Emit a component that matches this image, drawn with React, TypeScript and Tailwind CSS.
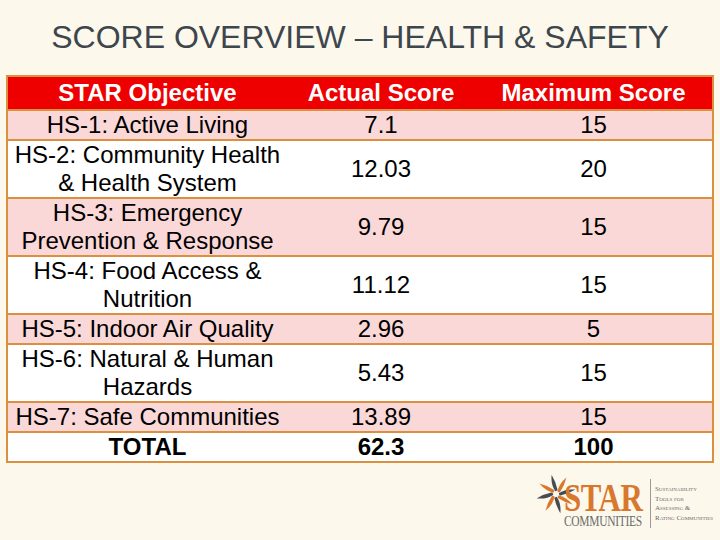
const rows = [
  { name: ["HS-1: Active Living"], actual: "7.1", max: "15", pink: true },
  { name: ["HS-2: Community Health", "& Health System"], actual: "12.03", max: "20", pink: false },
  { name: ["HS-3: Emergency", "Prevention & Response"], actual: "9.79", max: "15", pink: true },
  { name: ["HS-4: Food Access &", "Nutrition"], actual: "11.12", max: "15", pink: false },
  { name: ["HS-5: Indoor Air Quality"], actual: "2.96", max: "5", pink: true },
  { name: ["HS-6: Natural & Human", "Hazards"], actual: "5.43", max: "15", pink: false },
  { name: ["HS-7: Safe Communities"], actual: "13.89", max: "15", pink: true },
]

function Pinwheel() {
  const angles = [0, 45, 90, 135, 180, 225, 270, 315]
  return (
    <svg width="38" height="38" viewBox="0 0 40 40" className="absolute left-0 top-[2px]">
      {angles.map((a, i) => (
        <path
          key={a}
          d="M21.5 17.5 Q23 9 31 2.5 Q29 11 24 18.5 Z"
          fill={i % 2 === 0 ? "#d8782e" : "#474c52"}
          transform={`rotate(${a} 20 20)`}
        />
      ))}
    </svg>
  )
}

function Logo() {
  return (
    <div className="flex items-start">
      <div className="relative w-[113px] h-[56px]">
        <Pinwheel />
        <div className="absolute left-[27px] top-[9px] font-['Liberation_Serif',serif] font-bold text-[31px] leading-[24px] tracking-[-0.5px] text-[#d8782e] origin-top scale-y-[1.3]">
          STAR
        </div>
        <div className="absolute left-[27px] top-[41px] font-['Liberation_Serif',serif] text-[11.5px] leading-[12px] text-[#6b6b6b] origin-top scale-y-[1.2] tracking-[-0.3px]">
          COMMUNITIES
        </div>
      </div>
      <div className="w-px h-[49px] mt-[6px] bg-[#9a9a9a]" />
      <div className="pl-[4px] pt-[12px] font-['Liberation_Serif',serif] text-[7px] leading-[9.5px] text-[#6b6b6b] [font-variant-caps:small-caps] whitespace-nowrap">
        <div>Sustainability</div>
        <div>Tools for</div>
        <div>Assessing &amp;</div>
        <div>Rating Communities</div>
      </div>
    </div>
  )
}

export default function App() {
  return (
    <div className="w-[720px] h-[540px] bg-[#fdf8ec] font-['Liberation_Sans',Arial,sans-serif] overflow-hidden">
      <h1 className="pt-[21px] text-center text-[32px] leading-[32px] text-[#3d464d]">
        SCORE OVERVIEW – HEALTH &amp; SAFETY
      </h1>

      <div className="mt-[22px] mx-[6px] border-2 border-[#dc8f3f] text-[24px] leading-[28px] text-black">
        {/* Header */}
        <div className="grid grid-cols-[279px_188px_1fr] bg-[#ef0000] text-white font-bold text-center py-[2px]">
          <div>STAR Objective</div>
          <div>Actual Score</div>
          <div>Maximum Score</div>
        </div>

        {rows.map((r) => (
          <div
            key={r.name[0]}
            className={`grid grid-cols-[279px_188px_1fr] items-center text-center border-t-2 border-[#dc8f3f] ${
              r.pink ? "bg-[#fbd8d8]" : "bg-white"
            }`}
          >
            <div>
              {r.name.map((l) => (
                <div key={l}>{l}</div>
              ))}
            </div>
            <div>{r.actual}</div>
            <div>{r.max}</div>
          </div>
        ))}

        {/* Total */}
        <div className="grid grid-cols-[279px_188px_1fr] text-center font-bold border-t-2 border-[#dc8f3f] bg-white">
          <div>TOTAL</div>
          <div>62.3</div>
          <div>100</div>
        </div>
      </div>

      <div className="flex justify-end pr-[7px] mt-[10px]">
        <Logo />
      </div>
    </div>
  )
}
